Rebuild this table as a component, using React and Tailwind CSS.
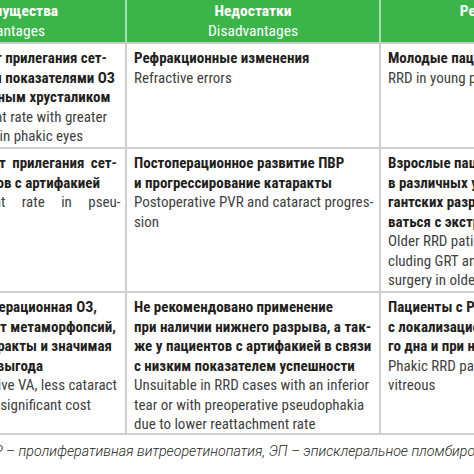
// left column is clipped by the viewport; each line keeps its own right edge
const rows = [
  {
    h: "h-[105px]",
    cells: [
      {
        ru: [
          ["Высокий процент прилегания сет-", "pr-[18px]"],
          ["чатки с лучшими показателями ОЗ", "pr-[10px]"],
          ["у пациентов с нативным хрусталиком", "pr-[16px]"],
        ],
        en: [
          ["Higher reattachment rate with greater", "pr-[18px]"],
          ["VA improvement in phakic eyes", "pr-[42px]"],
        ],
      },
      { ru: ["Рефракционные изменения"], en: ["Refractive errors"] },
      { ru: ["Молодые пациенты с РОС"], en: ["RRD in young patients"] },
    ],
  },
  {
    h: "h-[144px]",
    cells: [
      {
        ru: [
          ["Высокий процент прилегания сет-", "pr-[8px] [word-spacing:3px]"],
          ["чатки у пациентов с артифакией", "pr-[25px]"],
        ],
        en: [
          ["Higher reattachment rate in pseu-", "pr-[8px] [word-spacing:13px]"],
          ["dophakic eyes", "hidden"],
        ],
      },
      {
        ru: ["Постоперационное развитие ПВР", "и прогрессирование катаракты"],
        en: ["Postoperative PVR and cataract progres-", "sion"],
      },
      {
        ru: ["Взрослые пациенты с РОС", "в различных участках, включая ги-", "гантских разрывов, могут оперирo-", "ваться с экстрасклеральным доступом"],
        en: ["Older RRD patients in various sites, in-", "cluding GRT and PVR, may undergo", "surgery in older patients"],
      },
    ],
  },
  {
    h: "h-[142px]",
    cells: [
      {
        ru: [
          ["Лучшая послеоперационная ОЗ,", "pr-[28px]"],
          ["меньший процент метаморфопсий,", "pr-[9px]"],
          ["прогрессии катаракты и значимая", "pr-[13px]"],
          ["экономическая выгода", "pr-[82px]"],
        ],
        en: [
          ["Better postoperative VA, less cataract", "pr-[8px]"],
          ["progression and significant cost", "pr-[34px]"],
        ],
      },
      {
        ru: ["Не рекомендовано применение", "при наличии нижнего разрыва, а так-", "же у пациентов с артифакией в связи", "с низким показателем успешности"],
        en: ["Unsuitable in RRD cases with an inferior", "tear or with preoperative pseudophakia", "due to lower reattachment rate"],
      },
      {
        ru: ["Пациенты с РОС и нативным", "с локализацией разрывов в верхних", "го дна и при наличии"],
        en: ["Phakic RRD patients with formed", "vitreous"],
      },
    ],
  },
];

function Line({ line, className }) {
  if (Array.isArray(line)) {
    return <div className={`${className} whitespace-nowrap text-right ${line[1]}`}>{line[0]}</div>;
  }
  return <div className={`${className} whitespace-nowrap`}>{line}</div>;
}

function Cell({ cell, col }) {
  return (
    <div className={`pt-[5px] ${col === 0 ? "" : "px-[7px]"} ${col < 2 ? "border-r-2 border-[#d2cdcd]" : ""}`}>
      {cell.ru.map((l, i) => (
        <Line key={i} line={l} className="font-bold text-[#231f20]" />
      ))}
      {cell.en.map((l, i) => (
        <Line key={i} line={l} className="text-[#413f40]" />
      ))}
    </div>
  );
}

export default function App() {
  return (
    <div className="w-[474px] h-[474px] overflow-hidden bg-white">
      <div
        className="ml-[-129px] w-[764px] text-[15px] leading-[19.5px]"
        style={{ fontFamily: '"Roboto Condensed", Roboto, sans-serif' }}
      >
        <div className="grid grid-cols-[256px_254px_254px] h-[44px] bg-[#3bb54a] text-white border-b-2 border-[#d2cdcd] text-[15.5px]">
          {[
            ["Преимущества", "Advantages", "pl-[22px]"],
            ["Недостатки", "Disadvantages", ""],
            ["Рекомендации", "Indications", ""],
          ].map(([a, b, pad], i) => (
            <div key={i} className={`text-center pt-[2px] ${pad} ${i < 2 ? "border-r-2 border-[#a9dfb0]" : ""}`}>
              <div className="font-bold">{a}</div>
              <div>{b}</div>
            </div>
          ))}
        </div>
        {rows.map((r, i) => (
          <div key={i} className={`grid grid-cols-[256px_254px_254px] ${r.h} border-b-2 border-[#d2cdcd]`}>
            {r.cells.map((c, j) => (
              <Cell key={j} cell={c} col={j} />
            ))}
          </div>
        ))}
        <div
          className="pt-[7px] italic font-light text-[14.2px] leading-[19px] text-[#231f20] whitespace-nowrap pl-[105px]"
          style={{ fontFamily: "Roboto, sans-serif" }}
        >
          ПВР – пролиферативная витреоретинопатия, ЭП – эписклеральное пломбирование
        </div>
      </div>
    </div>
  );
}
